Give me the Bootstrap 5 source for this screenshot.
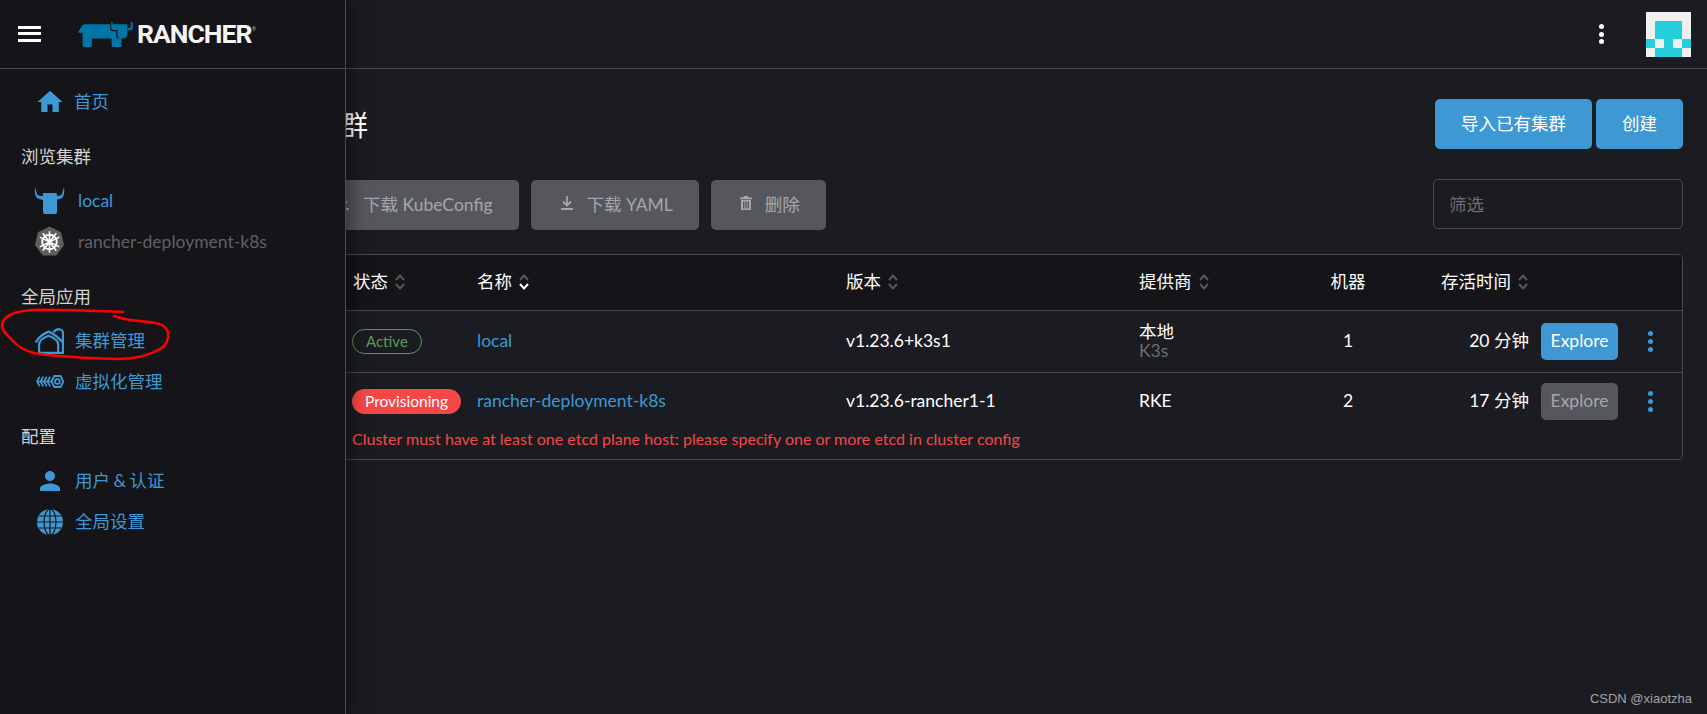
<!DOCTYPE html>
<html lang="zh">
<head>
<meta charset="utf-8">
<title>Rancher</title>
<link href="https://cdn.jsdelivr.net/npm/bootstrap@5.3.0/dist/css/bootstrap.min.css" rel="stylesheet">
<style>
:root{--pri:#3d98d3;--line:#4a4b52;--side:#141419;--page:#1b1c21;}
html,body{height:714px;overflow:hidden;}
body{background:var(--page);color:#fff;font-family:Lato,"Noto Sans CJK SC",sans-serif;font-size:17.5px;line-height:1.25;}
.stage{height:714px;position:relative;overflow:hidden;}
.topbar{height:69px;border-bottom:1px solid var(--line);padding-right:16px;}
.kebab{margin-right:42px;width:5px;}
.kebab i{display:block;width:5px;height:5px;border-radius:50%;background:#fff;margin:2.5px 0;}
.identicon{width:45px;height:45px;display:grid;grid-template-columns:repeat(5,9px);grid-auto-rows:9px;background:#f0f0f0;}
.identicon b{background:#26cdda;}
.identicon u{background:#f0f0f0;}
.content{padding:30px 24px 0 312px;}
.page-title{font-size:28px;font-weight:400;line-height:52px;height:50px;margin:0;}
.act{height:50px;border:0;border-radius:5px;font-size:17.5px;line-height:1;padding:0 26px;color:#fff;background:var(--pri);display:inline-flex;align-items:center;}
.act:hover{background:var(--pri);color:#fff;}
.act.off{background:#56575c;color:#a5a6ad;padding:0 26px 0 29px;}
.act.off:hover{background:#56575c;color:#a5a6ad;}
.act svg{margin-right:13px;margin-top:-5px;flex:none;}
.tools{margin-top:31px;margin-bottom:24px;height:50px;}
.gap-act{gap:12px;margin-left:-5px;}
.gap-top{gap:4px;}
.filter{width:250px;height:50px;margin-top:-1px;background:transparent;border:1px solid var(--line);border-radius:5px;color:#fff;font-size:17.5px;padding:0 15px;box-shadow:none;}
.filter::placeholder{color:#6c6c76;}
.filter:focus{background:transparent;border-color:var(--line);box-shadow:none;color:#fff;}
.grid-box{border:1px solid var(--line);border-radius:5px;overflow:hidden;}
.grid-box table{table-layout:fixed;width:100%;margin:0;--bs-table-bg:transparent;--bs-table-color:#fff;color:#fff;font-size:17.5px;border-collapse:collapse;}
.grid-box th,.grid-box td{padding:0 8px;vertical-align:middle;border:0;}
.grid-box thead tr{height:55px;background:var(--side);}
.grid-box th{font-weight:400;border-bottom:1px solid var(--line);}
.grid-box .r1{height:62px;}
.grid-box .r1 td{border-bottom:1px solid var(--line);}
.grid-box .r2{height:58px;}
.grid-box .r3{height:29px;}
.grid-box .r3 td{vertical-align:top;color:#f64747;font-size:16px;line-height:18px;}
.grid-box .r3 td span{margin-left:-1px;}
.grid-box a{color:var(--pri);text-decoration:none;}
.grid-box .cell-go{padding:0 0 0 4px;}
.sort{margin-left:6px;vertical-align:-3px;}
.pill-ok,.pill-bad{display:inline-block;border-radius:13px;line-height:1;white-space:nowrap;}
.pill-ok{font-size:15px;color:#5d995d;border:1px solid #5d995d;padding:4px 13px;height:25px;margin-left:-1px;}
.pill-bad{font-size:15.5px;color:#fff;background:#f64747;padding:5px 13px;height:25px;margin-left:-1px;}
.sub-k{color:#6c6c76;display:block;line-height:18px;}
.top-k{display:block;line-height:20px;}
.go{height:37px;width:77px;padding:0;border:0;border-radius:5px;font-size:17.5px;color:#fff;background:var(--pri);}
.go:hover{background:var(--pri);color:#fff;}
.go.off{background:#56575c;color:#a5a6ad;}
.go.off:hover{background:#56575c;color:#a5a6ad;}
.dots-b{width:5px;margin-left:14px;}
.dots-b i{display:block;width:5px;height:5px;border-radius:50%;background:var(--pri);margin:3px 0;}
.rail{position:absolute;top:0;left:0;bottom:0;width:346px;background:var(--side);border-right:1px solid var(--line);box-shadow:0 0 18px 2px rgba(0,0,0,.55);}
.rail-head{height:69px;border-bottom:1px solid var(--line);padding-left:18px;}
.burger{width:23px;margin-right:37px;margin-top:-1px;}
.burger i{display:block;height:3px;background:#fff;margin:3.5px 0;}
.brand{font-family:Roboto,sans-serif;font-weight:700;font-size:26.5px;letter-spacing:-1px;color:#f4f4f4;line-height:1;margin-left:3px;}
.brand sup{font-size:6px;top:-2em;font-weight:400;letter-spacing:0;color:#aaa;}
.rail-body{padding-top:12px;}
.rail-cap{height:30px;line-height:30px;padding-left:21px;color:#d4d4d4;margin-top:20px;margin-bottom:8px;}
.rail-item{height:41px;display:flex;align-items:center;padding-left:34px;color:var(--pri);}
.rail-item .pic{width:31px;display:flex;justify-content:center;flex:none;}
.rail-item .t9{margin-left:9px;}
.rail-item .t10{margin-left:10px;}
.rail-item .t13{margin-left:13px;}
.rail-item .tight{word-spacing:-1px;}
.rail-item.dim{color:#616161;}
.scribble{position:absolute;left:0;top:305px;pointer-events:none;}
.mark-csdn{position:absolute;right:15px;bottom:9px;font-family:"Liberation Sans",sans-serif;font-size:13px;color:#a3a3a3;line-height:1;}
</style>
</head>
<body>
<div class="stage">
  <header class="topbar d-flex align-items-center justify-content-end">
    <div class="kebab"><i></i><i></i><i></i></div>
    <div class="identicon">
      <u></u><u></u><u></u><u></u><u></u>
      <u></u><b></b><b></b><b></b><u></u>
      <u></u><b></b><b></b><b></b><u></u>
      <b></b><u></u><b></b><u></u><b></b>
      <u></u><b></b><b></b><b></b><u></u>
    </div>
  </header>
  <main class="content">
    <div class="d-flex justify-content-between align-items-center">
      <h1 class="page-title">集群</h1>
      <div class="d-flex gap-top">
        <button class="btn act" type="button">导入已有集群</button>
        <button class="btn act" type="button">创建</button>
      </div>
    </div>
    <div class="tools d-flex justify-content-between align-items-start">
      <div class="d-flex gap-act">
        <button class="btn act off" type="button"><svg width="14" height="14" viewBox="0 0 14 14" fill="none" stroke="currentColor" stroke-width="1.8"><path d="M7 0V9M3 5.5L7 9.5L11 5.5M1 13H13"/></svg>下载 KubeConfig</button>
        <button class="btn act off" type="button"><svg width="14" height="14" viewBox="0 0 14 14" fill="none" stroke="currentColor" stroke-width="1.8"><path d="M7 0V9M3 5.5L7 9.5L11 5.5M1 13H13"/></svg>下载 YAML</button>
        <button class="btn act off" type="button"><svg width="12" height="14" viewBox="0 0 12 14" fill="currentColor"><path d="M4 0H8L9 1.5H12V3.2H0V1.5H3ZM1 4H11V14H1ZM3 5.5V12.5H4.4V5.5ZM5.3 5.5V12.5H6.7V5.5ZM7.6 5.5V12.5H9V5.5Z"/></svg>删除</button>
      </div>
      <input class="form-control filter" type="text" placeholder="筛选">
    </div>
    <div class="grid-box">
      <table class="table">
        <colgroup>
          <col style="width:32px"><col style="width:124px"><col style="width:369px"><col style="width:293px"><col style="width:153px"><col style="width:128px"><col style="width:125px"><col style="width:89px"><col>
        </colgroup>
        <thead>
          <tr>
            <th></th>
            <th>状态<svg class="sort" width="12" height="18" viewBox="0 0 12 18" fill="none" stroke="#56575c" stroke-width="2"><path d="M2 7L6 2.5L10 7M2 11L6 15.5L10 11"/></svg></th>
            <th>名称<svg class="sort" width="12" height="18" viewBox="0 0 12 18" fill="none" stroke-width="2"><path stroke="#56575c" d="M2 7L6 2.5L10 7"/><path stroke="#fff" d="M2 11L6 15.5L10 11"/></svg></th>
            <th>版本<svg class="sort" width="12" height="18" viewBox="0 0 12 18" fill="none" stroke="#56575c" stroke-width="2"><path d="M2 7L6 2.5L10 7M2 11L6 15.5L10 11"/></svg></th>
            <th>提供商<svg class="sort" width="12" height="18" viewBox="0 0 12 18" fill="none" stroke="#56575c" stroke-width="2"><path d="M2 7L6 2.5L10 7M2 11L6 15.5L10 11"/></svg></th>
            <th class="text-center">机器</th>
            <th class="text-end text-nowrap">存活时间<svg class="sort" width="12" height="18" viewBox="0 0 12 18" fill="none" stroke="#56575c" stroke-width="2"><path d="M2 7L6 2.5L10 7M2 11L6 15.5L10 11"/></svg></th>
            <th></th><th></th>
          </tr>
        </thead>
        <tbody>
          <tr class="r1">
            <td></td>
            <td><span class="pill-ok">Active</span></td>
            <td><a href="#">local</a></td>
            <td>v1.23.6+k3s1</td>
            <td><span class="top-k">本地</span><span class="sub-k">K3s</span></td>
            <td class="text-center">1</td>
            <td class="text-end text-nowrap">20 分钟</td>
            <td class="cell-go"><button class="btn go" type="button">Explore</button></td>
            <td><div class="dots-b"><i></i><i></i><i></i></div></td>
          </tr>
          <tr class="r2">
            <td></td>
            <td><span class="pill-bad">Provisioning</span></td>
            <td><a href="#">rancher-deployment-k8s</a></td>
            <td>v1.23.6-rancher1-1</td>
            <td>RKE</td>
            <td class="text-center">2</td>
            <td class="text-end text-nowrap">17 分钟</td>
            <td class="cell-go"><button class="btn go off" type="button">Explore</button></td>
            <td><div class="dots-b"><i></i><i></i><i></i></div></td>
          </tr>
          <tr class="r3">
            <td></td>
            <td colspan="8"><span>Cluster must have at least one etcd plane host: please specify one or more etcd in cluster config</span></td>
          </tr>
        </tbody>
      </table>
    </div>
  </main>
  <aside class="rail">
    <div class="rail-head d-flex align-items-center">
      <div class="burger"><i></i><i></i><i></i></div>
      <svg width="56" height="27" viewBox="0 0 170 80" fill="#0075a8"><path d="M0 33L13 13Q16 9 22 9H98V22Q98 30 106 30H116V46Q116 50 122 52H132V78H106Q102 78 102 74V52H42V74Q42 78 38 78H18Q14 78 14 74V33L8 36Z"/><path d="M101 2H105V9H150V38Q150 52 136 52H126Q120 50 120 44V26H108Q101 26 101 20ZM160 3H166V20Q166 27 158 27H152V20H157Q160 20 160 16Z"/></svg>
      <span class="brand">RANCHER<sup>®</sup></span>
    </div>
    <nav class="rail-body">
      <div class="rail-item"><span class="pic"><svg width="30" height="30" viewBox="0 0 24 24" fill="currentColor"><path d="M10 20v-6h4v6h5v-8h3L12 3 2 12h3v8z"/></svg></span><span class="t9">首页</span></div>
      <div class="rail-cap">浏览集群</div>
      <div class="rail-item"><span class="pic"><svg width="31" height="28" viewBox="0 0 31 28" fill="currentColor"><path d="M9 6H22Q23 6 23 8V25Q23 27 21 27H11Q9 27 9 25V8Q9 6 9 6Z"/><path d="M1 0Q0 8 3 11Q5 12 9 13V9Q4 9 3 7ZM30 0Q31 8 28 11Q26 12 22 13V9Q27 9 28 7Z"/></svg></span><span class="t13">local</span></div>
      <div class="rail-item dim"><span class="pic"><svg width="32" height="32" viewBox="0 0 32 32"><path fill="#5e5e5e" d="M16 0L28 6L31 19L23 30H9L1 19L4 6Z"/><g fill="none" stroke="#fff"><circle cx="16" cy="16" r="7.5" stroke-width="2"/><path stroke-width="1.6" d="M16 5V27M6 11L26 21M26 11L6 21M9 25L23 7M23 25L9 7"/></g><circle cx="16" cy="16" r="2" fill="#fff"/></svg></span><span class="t13">rancher-deployment-k8s</span></div>
      <div class="rail-cap">全局应用</div>
      <div class="rail-item"><span class="pic"><svg width="29" height="26" viewBox="0 0 85 75" fill="none" stroke="currentColor" stroke-width="6.5"><path d="M12 72V48Q12 32 40 22Q68 32 68 48V72Z"/><path d="M2 42Q14 20 40 10Q60 18 82 42"/><path d="M54 12Q60 3 71 3Q82 4 82 15V72H68"/></svg></span><span class="t10">集群管理</span></div>
      <div class="rail-item"><span class="pic"><svg width="28" height="15" viewBox="0 0 81 40" fill="none" stroke="currentColor" stroke-width="5"><path d="M11 6L3 20L11 34M21 6L13 20L21 34M31 6L23 20L31 34M41 6L33 20L41 34M3 20H46"/><path stroke-width="5.5" d="M53 4H71L79 20L71 36H53L45 20Z"/><circle cx="62" cy="20" r="7"/></svg></span><span class="t10">虚拟化管理</span></div>
      <div class="rail-cap">配置</div>
      <div class="rail-item"><span class="pic"><svg width="30" height="30" viewBox="0 0 24 24" fill="currentColor"><path d="M12 12c2.21 0 4-1.79 4-4s-1.79-4-4-4-4 1.79-4 4 1.79 4 4 4zm0 2c-2.67 0-8 1.34-8 4v2h16v-2c0-2.66-5.33-4-8-4z"/></svg></span><span class="t10 tight">用户 &amp; 认证</span></div>
      <div class="rail-item"><span class="pic"><svg width="26" height="26" viewBox="0 0 26 26"><circle cx="13" cy="13" r="13" fill="currentColor"/><g fill="none" stroke="#141419" stroke-width="1.2"><path d="M13 0V26M0 13H26M2 7H24M2 19H24"/><ellipse cx="13" cy="13" rx="6" ry="13"/></g></svg></span><span class="t10">全局设置</span></div>
    </nav>
  </aside>
  <svg class="scribble" width="175" height="60" viewBox="0 305 175 60" fill="none" stroke="#f00" stroke-width="2.6" stroke-linecap="round"><path d="M123 312C90 311 55 309 33 310C15 311 3 316 2 325C2 331 7 335 12 340C18 347 25 351 34 353C50 356 85 358 117 359C135 359 150 355 160 349C167 345 169 338 168 332C166 326 162 324 155 323C145 321 125 321 114 316"/></svg>
  <div class="mark-csdn">CSDN @xiaotzha</div>
</div>
<script src="https://cdn.jsdelivr.net/npm/bootstrap@5.3.0/dist/js/bootstrap.bundle.min.js"></script>
</body>
</html>
